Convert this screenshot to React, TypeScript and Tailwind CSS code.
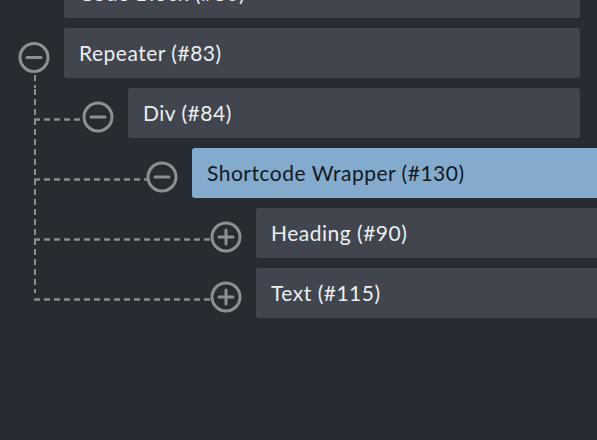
const rows = [
  { id: 1, label: "Code Block (#80)", level: 0, kind: "none" },
  { id: 2, label: "Repeater (#83)", level: 0, kind: "minus" },
  { id: 3, label: "Div (#84)", level: 1, kind: "minus" },
  { id: 4, label: "Shortcode Wrapper (#130)", level: 2, kind: "minus", selected: true },
  { id: 5, label: "Heading (#90)", level: 3, kind: "plus" },
  { id: 6, label: "Text (#115)", level: 3, kind: "plus", last: true },
];

const LINE = "#8a8c8f";
const RING = "#8d8f92";

const Toggle = ({ cx, cy, kind }: { cx: number; cy: number; kind: string }) => (
  <g>
    <circle cx={cx} cy={cy} r={14} fill="#272c33" stroke={RING} strokeWidth={3} />
    <line x1={cx - 7} y1={cy} x2={cx + 7} y2={cy} stroke={RING} strokeWidth={3} strokeLinecap="round" />
    {kind === "plus" && (
      <line x1={cx} y1={cy - 7} x2={cx} y2={cy + 7} stroke={RING} strokeWidth={3} strokeLinecap="round" />
    )}
  </g>
);

// the gutter left of each row: toggle circle and the dashed tree lines
const Gutter = ({ row }: { row: (typeof rows)[number] }) => {
  const w = 64 + row.level * 64;
  const cx = w - 30;
  if (row.kind === "none") return <div className="shrink-0" style={{ width: w }} />;
  return (
    <svg width={w} height={60} className="shrink-0 overflow-visible">
      {row.level === 0 ? (
        <line x1={35} y1={47} x2={35} y2={60} stroke={LINE} strokeWidth={2} strokeDasharray="6 4" />
      ) : (
        <>
          <line x1={35} y1={1} x2={35} y2={row.last ? 25 : 60} stroke={LINE} strokeWidth={2} strokeDasharray="6 4" />
          <line x1={34} y1={31.5} x2={cx - 14} y2={31.5} stroke={LINE} strokeWidth={2.5} strokeDasharray="6 4" />
        </>
      )}
      <Toggle cx={cx} cy={row.level === 0 ? 29.5 : 29} kind={row.kind} />
    </svg>
  );
};

const App = () => {
  return (
    <div
      className="w-[597px] h-[440px] overflow-hidden bg-[#272c33]"
      style={{ fontFamily: "Lato, 'Open Sans', sans-serif" }}
    >
      <div className="flex flex-col -mt-[32px] w-[580px]">
        {rows.map((row) => (
          <div key={row.id} className="flex h-[60px] items-start">
            <Gutter row={row} />
            <div
              className={
                row.selected
                  ? "flex h-[50px] min-w-[420px] flex-1 items-center whitespace-nowrap rounded-[3px] bg-[#83abcd] pl-[15px] text-[21px] tracking-[0.5px] text-[#15191d]"
                  : "flex h-[50px] min-w-[360px] flex-1 items-center whitespace-nowrap rounded-[3px] bg-[#41464e] pl-[15px] text-[21px] tracking-[0.5px] text-[#eceef0]"
              }
            >
              {row.label}
            </div>
          </div>
        ))}
      </div>
    </div>
  );
};

export default App;
